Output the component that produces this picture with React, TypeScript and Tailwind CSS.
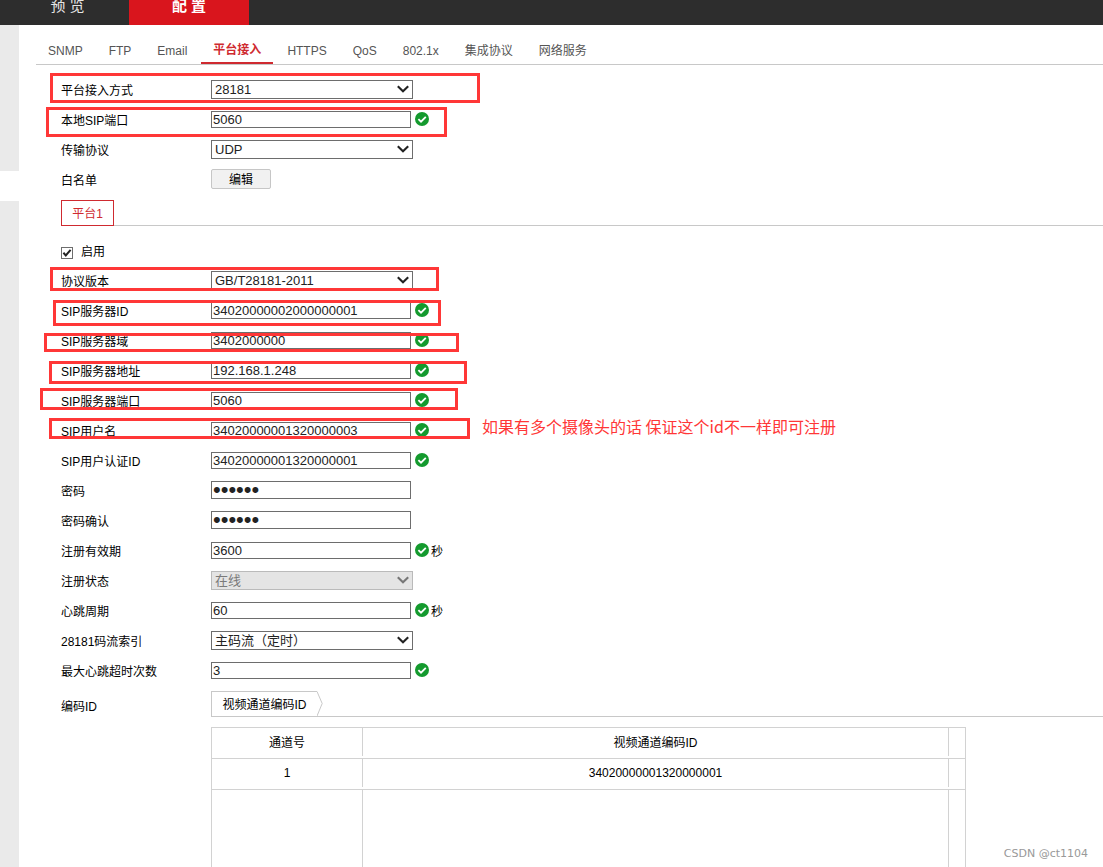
import type { ReactNode } from 'react';

const TABS = ['SNMP', 'FTP', 'Email', '平台接入', 'HTTPS', 'QoS', '802.1x', '集成协议', '网络服务'];
const ACTIVE_TAB = '平台接入';

const MARKS = [
  'left-[50px] top-[73px] h-[30px] w-[430px]',
  'left-[46px] top-[107px] h-[30px] w-[401px]',
  'left-[50px] top-[267px] h-[24px] w-[389px]',
  'left-[53px] top-[300px] h-[26px] w-[388px]',
  'left-[44px] top-[333px] h-[19px] w-[415px]',
  'left-[49px] top-[361px] h-[23px] w-[418px]',
  'left-[40px] top-[388px] h-[22px] w-[418px]',
  'left-[49px] top-[418px] h-[21px] w-[421px]',
];

function ValidIcon() {
  return (
    <svg viewBox="0 0 14 14" className="mt-px size-[14px] shrink-0" aria-hidden="true">
      <circle cx="7" cy="7" r="7" fill="#149a2e" />
      <path d="M3.4 7.2 6 9.7 10.8 4.8" fill="none" stroke="#fff" strokeWidth="1.8" />
    </svg>
  );
}

function Row({ label, htmlFor, children }: { label: string; htmlFor: string; children: ReactNode }) {
  return (
    <div className="flex h-[30px] items-start">
      <label htmlFor={htmlFor} className="w-[150px] shrink-0 pt-1.5 leading-5">
        {label}
      </label>
      {children}
    </div>
  );
}

function SelectRow({ id, label, value, disabled = false }: { id: string; label: string; value: string; disabled?: boolean }) {
  return (
    <Row label={label} htmlFor={id}>
      <div className="relative mt-[5px] w-[202px]">
        <select
          id={id}
          disabled={disabled}
          className="block h-[19px] w-full appearance-none border border-[#6d6d6d] bg-white pl-[3px] text-[13px] leading-[17px] text-[#222] disabled:border-[#bababa] disabled:bg-[#e4e4e4] disabled:text-[#7a7a7a] disabled:opacity-100"
        >
          <option>{value}</option>
        </select>
        <svg
          viewBox="0 0 12 8"
          className={`pointer-events-none absolute right-1 top-[5px] h-2 w-3 ${disabled ? 'text-[#777]' : 'text-[#222]'}`}
          aria-hidden="true"
        >
          <path d="M0.8 1.2 6 6.2 11.2 1.2" fill="none" stroke="currentColor" strokeWidth="2.1" />
        </svg>
      </div>
    </Row>
  );
}

function InputRow({ id, label, value, unit }: { id: string; label: string; value: string; unit?: string }) {
  return (
    <Row label={label} htmlFor={id}>
      <div className="flex items-start pt-1.5">
        <input
          id={id}
          defaultValue={value}
          className="mr-1 h-[17px] w-[200px] border border-[#6d6d6d] bg-white px-px text-[13px] leading-[15px] text-[#222]"
        />
        <ValidIcon />
        {unit && <span className="ml-0.5 leading-5">{unit}</span>}
      </div>
    </Row>
  );
}

function PasswordRow({ id, label }: { id: string; label: string }) {
  return (
    <Row label={label} htmlFor={id}>
      <input
        id={id}
        type="password"
        defaultValue="123456"
        className="mt-[5px] h-[18px] w-[200px] border border-[#6d6d6d] bg-white px-px text-[22px] leading-4 text-[#222]"
      />
    </Row>
  );
}

function Cell({ children, last = false, header = false }: { children?: ReactNode; last?: boolean; header?: boolean }) {
  const Tag = header ? 'th' : 'td';
  return (
    <Tag className="h-[31px] border-b border-[#d2d2d2] p-0 align-top font-normal">
      <div className={`h-7 ${header ? 'leading-[30px]' : 'leading-7'} ${last ? '' : 'border-r border-[#d2d2d2]'}`}>
        {children}
      </div>
    </Tag>
  );
}

export default function App() {
  return (
    <div className="relative flex min-h-screen flex-col overflow-hidden bg-white font-['Liberation_Sans','Noto_Sans_CJK_SC',sans-serif] text-xs text-black">
      <header className="h-[25px] bg-[#2d2d2d]">
        <nav className="flex h-full text-center text-[15px] leading-3">
          <a href="#preview" className="w-[129px] pl-1.5 text-[#e6e6e6]">
            预 览
          </a>
          <a href="#config" className="w-[120px] bg-[#d9151d] font-bold text-white">
            配 置
          </a>
        </nav>
      </header>

      <div className="flex flex-1">
        <aside className="flex w-[19px] shrink-0 flex-col">
          <div className="h-[146px] bg-[#eaeaea]" />
          <div className="h-[30px] bg-white" />
          <div className="flex-1 bg-[#eaeaea]" />
        </aside>

        <main className="min-w-0 flex-1 pl-[17px]">
          <nav className="flex h-10 items-end gap-0.5 border-b border-[#c8c8c8]">
            {TABS.map((tab) => (
              <a
                key={tab}
                href={`#${tab}`}
                className={
                  tab === ACTIVE_TAB
                    ? 'h-[26px] border-b-2 border-[#cf2a30] px-3 font-bold leading-6 text-[#cf2a30]'
                    : 'h-[26px] px-3 leading-[26px] text-[#555]'
                }
              >
                {tab}
              </a>
            ))}
          </nav>

          <form className="pl-[25px] pt-2.5">
            <SelectRow id="access-mode" label="平台接入方式" value="28181" />
            <InputRow id="local-port" label="本地SIP端口" value="5060" />
            <SelectRow id="transport" label="传输协议" value="UDP" />
            <Row label="白名单" htmlFor="whitelist">
              <button
                id="whitelist"
                type="button"
                className="mt-1 h-5 w-[60px] rounded-xs border border-[#c6c6c6] bg-[#f1f1f1] leading-5"
              >
                编辑
              </button>
            </Row>

            <div className="flex h-[31px] items-end border-b border-[#c8c8c8]">
              <button type="button" className="-mb-px h-[26px] w-[53px] border border-[#cf2a30] bg-white pt-0.5 text-[#cf2a30]">
                平台1
              </button>
            </div>

            <div className="flex h-10 items-start pt-4">
              <label className="flex items-center gap-2 leading-5">
                <input
                  type="checkbox"
                  defaultChecked
                  className="peer mt-0.5 size-3 appearance-none border border-[#6d6d6d] bg-white"
                />
                <svg viewBox="0 0 12 12" className="pointer-events-none -ml-5 mt-0.5 hidden size-3 peer-checked:block" aria-hidden="true">
                  <path d="M2.4 5.8 4.8 8.4 9.6 2.8" fill="none" stroke="#222" strokeWidth="2" />
                </svg>
                启用
              </label>
            </div>

            <SelectRow id="version" label="协议版本" value="GB/T28181-2011" />
            <InputRow id="server-id" label="SIP服务器ID" value="34020000002000000001" />
            <InputRow id="server-domain" label="SIP服务器域" value="3402000000" />
            <InputRow id="server-address" label="SIP服务器地址" value="192.168.1.248" />
            <InputRow id="server-port" label="SIP服务器端口" value="5060" />
            <InputRow id="sip-user" label="SIP用户名" value="34020000001320000003" />
            <InputRow id="sip-auth" label="SIP用户认证ID" value="34020000001320000001" />
            <PasswordRow id="password" label="密码" />
            <PasswordRow id="password-confirm" label="密码确认" />
            <InputRow id="validity" label="注册有效期" value="3600" unit="秒" />
            <SelectRow id="status" label="注册状态" value="在线" disabled />
            <InputRow id="heartbeat" label="心跳周期" value="60" unit="秒" />
            <SelectRow id="stream" label="28181码流索引" value="主码流（定时）" />
            <InputRow id="max-timeout" label="最大心跳超时次数" value="3" />

            <div className="flex items-start pt-[5px]">
              <div className="w-[150px] shrink-0 pt-1.5 leading-5">编码ID</div>
              <div className="min-w-0 flex-1">
                <div className="flex h-[26px] border-b border-[#c8c8c8]">
                  <button type="button" className="w-[106px] border-l border-t border-[#c8c8c8] bg-white pt-0.5">
                    视频通道编码ID
                  </button>
                  <svg viewBox="0 0 6 25" className="h-[25px] w-1.5" aria-hidden="true">
                    <path d="M0 0.5 5.2 12.5 0 25" fill="none" stroke="#c8c8c8" />
                  </svg>
                </div>

                <table className="mt-2.5 w-full max-w-[755px] table-fixed border-separate border-spacing-0 border-x border-t border-[#d2d2d2] text-center">
                  <colgroup>
                    <col className="w-[151px]" />
                    <col />
                    <col className="w-4" />
                  </colgroup>
                  <thead>
                    <tr>
                      <Cell header>通道号</Cell>
                      <Cell header>视频通道编码ID</Cell>
                      <Cell last />
                    </tr>
                  </thead>
                  <tbody>
                    <tr>
                      <Cell>1</Cell>
                      <Cell>34020000001320000001</Cell>
                      <Cell last />
                    </tr>
                    <tr>
                      <td className="h-[77px] border-r border-[#d2d2d2]" />
                      <td className="border-r border-[#d2d2d2]" />
                      <td />
                    </tr>
                  </tbody>
                </table>
              </div>
            </div>
          </form>
        </main>
      </div>

      {MARKS.map((place) => (
        <div key={place} className={`pointer-events-none absolute border-3 border-[#ff3737] ${place}`} />
      ))}
      <p className="absolute left-[482px] top-[414px] font-['Noto_Sans_CJK_SC',sans-serif] text-base text-[#ff3737]">
        如果有多个摄像头的话 保证这个id不一样即可注册
      </p>
      <p className="absolute bottom-[5px] right-[15px] font-['DejaVu_Sans',sans-serif] text-[11px] leading-4 text-[#999]">
        CSDN @ct1104
      </p>
    </div>
  );
}
